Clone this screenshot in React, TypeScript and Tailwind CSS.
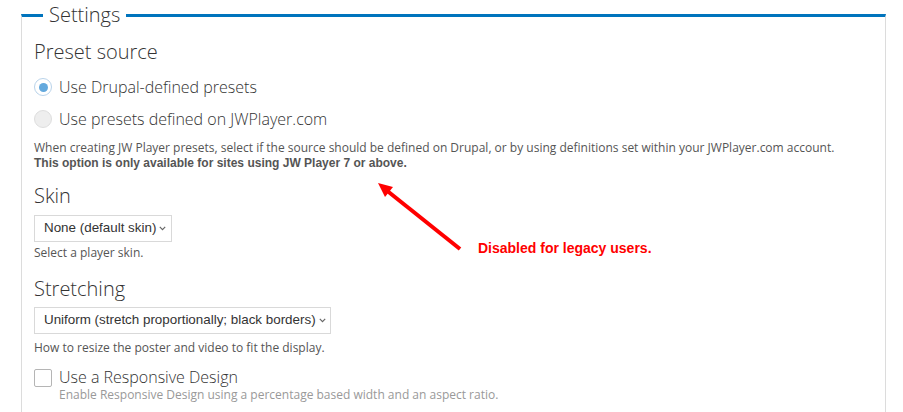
import React from "react";

function Chevron() {
  return (
    <svg width="7" height="5" viewBox="0 0 7 5" className="shrink-0">
      <path d="M0.8 0.9 L3.5 3.6 L6.2 0.9" fill="none" stroke="#666" strokeWidth="1.2" />
    </svg>
  );
}

function FakeSelect({ label, width }: { label: string; width: string }) {
  return (
    <div
      className={`flex h-[27px] items-center gap-[3px] border border-[#d9d9d9] bg-white pl-[9px] pr-[6px] font-['Liberation_Sans',Arial,sans-serif] text-[13.4px] text-[#333] ${width}`}
    >
      <span className="whitespace-nowrap">{label}</span>
      <Chevron />
    </div>
  );
}

export default function App() {
  return (
    <div className="relative h-[412px] w-[903px] overflow-hidden bg-white font-['Open_Sans',sans-serif] text-[#333]">
      <fieldset className="ml-[21px] mt-px h-[430px] w-[865px] border-x border-t-[3px] border-b-0 border-x-[#dcdcdc] border-t-[#0074bd] pl-[12px]">
        <legend className="ml-[9px] px-[6px] text-[20px] font-light leading-[28px] text-[#333]">Settings</legend>
        <div className="mt-[9px] flex flex-col">
          <h3 className="text-[20px] font-light leading-[28px] text-[#333]">Preset source</h3>
          <div className="mt-[9px] flex h-[24px] items-center gap-[7px]">
            <div className="flex h-[18px] w-[18px] items-center justify-center rounded-full border border-[#b9d3ea] bg-white">
              <div className="h-[9px] w-[9px] rounded-full bg-[#64a9dd]" />
            </div>
            <span className="text-[16px] font-light text-[#333]">Use Drupal-defined presets</span>
          </div>
          <div className="mt-[8px] flex h-[24px] items-center gap-[7px]">
            <div className="h-[18px] w-[18px] rounded-full border border-[#dedede] bg-[#eeeeee]" />
            <span className="text-[16px] font-light text-[#333]">Use presets defined on JWPlayer.com</span>
          </div>
          <p className="mt-[9px] text-[12px] leading-[16px] text-[#555]">
            When creating JW Player presets, select if the source should be defined on Drupal, or by using definitions set within your JWPlayer.com account.
          </p>
          <p className="font-['Liberation_Sans',Arial,sans-serif] text-[12px] font-bold leading-[14px] text-[#555]">
            This option is only available for sites using JW Player 7 or above.
          </p>
          <h3 className="mt-[12px] text-[20px] font-light leading-[28px] text-[#333]">Skin</h3>
          <div className="mt-[5px]">
            <FakeSelect label="None (default skin)" width="w-[138px]" />
          </div>
          <p className="mt-[3px] text-[12px] leading-[16px] text-[#555]">Select a player skin.</p>
          <h3 className="mt-[14px] text-[20px] font-light leading-[28px] text-[#333]">Stretching</h3>
          <div className="mt-[4px]">
            <FakeSelect label="Uniform (stretch proportionally; black borders)" width="w-[297px]" />
          </div>
          <p className="mt-[6px] text-[12px] leading-[16px] text-[#555]">How to resize the poster and video to fit the display.</p>
          <div className="mt-[11px] flex items-start gap-[7px]">
            <div className="mt-[2px] h-[18px] w-[18px] shrink-0 rounded-[2px] border border-[#b5b5b5] bg-white" />
            <div className="flex flex-col">
              <span className="text-[16px] font-light leading-[20px] text-[#333]">Use a Responsive Design</span>
              <span className="text-[12px] leading-[16px] text-[#999]">Enable Responsive Design using a percentage based width and an aspect ratio.</span>
            </div>
          </div>
        </div>
      </fieldset>

      <svg className="pointer-events-none absolute left-0 top-0" width="903" height="412" viewBox="0 0 903 412">
        <line x1="460" y1="249" x2="388" y2="191.5" stroke="#ff0000" strokeWidth="4" />
        <polygon points="378,183 393,187 385,197" fill="#ff0000" />
      </svg>
      <div className="absolute left-[478px] top-[239px] font-['Liberation_Sans',Arial,sans-serif] text-[14px] font-bold leading-[18px] text-[#ff0000]">
        Disabled for legacy users.
      </div>
    </div>
  );
}
